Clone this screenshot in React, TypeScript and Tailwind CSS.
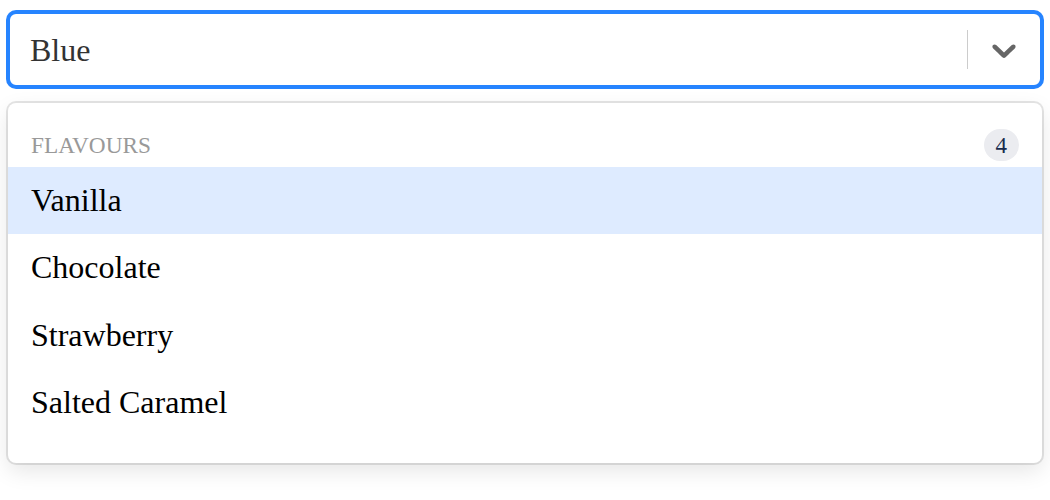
import React from "react";

const options = ["Vanilla", "Chocolate", "Strawberry", "Salted Caramel"];

export default function App() {
  return (
    <div
      className="w-[1050px] h-[500px] bg-white pt-[12px] px-[8px]"
      style={{ fontFamily: '"Liberation Serif", "Times New Roman", serif' }}
    >
      <div className="h-[75px] flex items-center bg-white border-2 border-[#2684FF] shadow-[0_0_0_2px_#2684FF] rounded-[8px]">
        <div className="flex-1 px-[16px]">
          <span className="ml-[4px] text-[32px] text-[#333333]">Blue</span>
        </div>
        <div className="flex self-stretch items-stretch">
          <span className="w-[1.5px] my-[16px] bg-[#cccccc]" />
          <div className="flex items-center px-[16px] text-[#666666]">
            <svg width="40" height="40" viewBox="0 0 20 20" fill="currentColor">
              <path d="M4.516 7.548c0.436-0.446 1.043-0.481 1.576 0l3.908 3.747 3.908-3.747c0.533-0.481 1.141-0.446 1.574 0 0.436 0.445 0.408 1.197 0 1.615-0.406 0.418-4.695 4.502-4.695 4.502-0.217 0.223-0.502 0.335-0.787 0.335s-0.57-0.112-0.789-0.335c0 0-4.287-4.084-4.695-4.502s-0.436-1.17 0-1.615z" />
            </svg>
          </div>
        </div>
      </div>

      <div className="mt-[16px] bg-white rounded-[8px] shadow-[0_0_0_2px_rgba(0,0,0,0.1),0_8px_22px_rgba(0,0,0,0.1)] py-[8px]">
        <div className="pt-[17px] pb-[18px]">
          <div className="flex items-center justify-between px-[23px] mb-[4px]">
            <span className="text-[23.3px] uppercase text-[#999999]">Flavours</span>
            <span className="inline-block bg-[#EBECF0] rounded-full text-[#172B4D] text-[23px] leading-none px-[12px] py-[4.5px] text-center">
              4
            </span>
          </div>
          {options.map((o, i) => (
            <div
              key={o}
              className={`px-[23px] py-[16px] text-[32px] leading-[35.5px] text-black ${
                i === 0 ? "bg-[#DEEBFF]" : "bg-transparent"
              }`}
            >
              {o}
            </div>
          ))}
        </div>
      </div>
    </div>
  );
}
